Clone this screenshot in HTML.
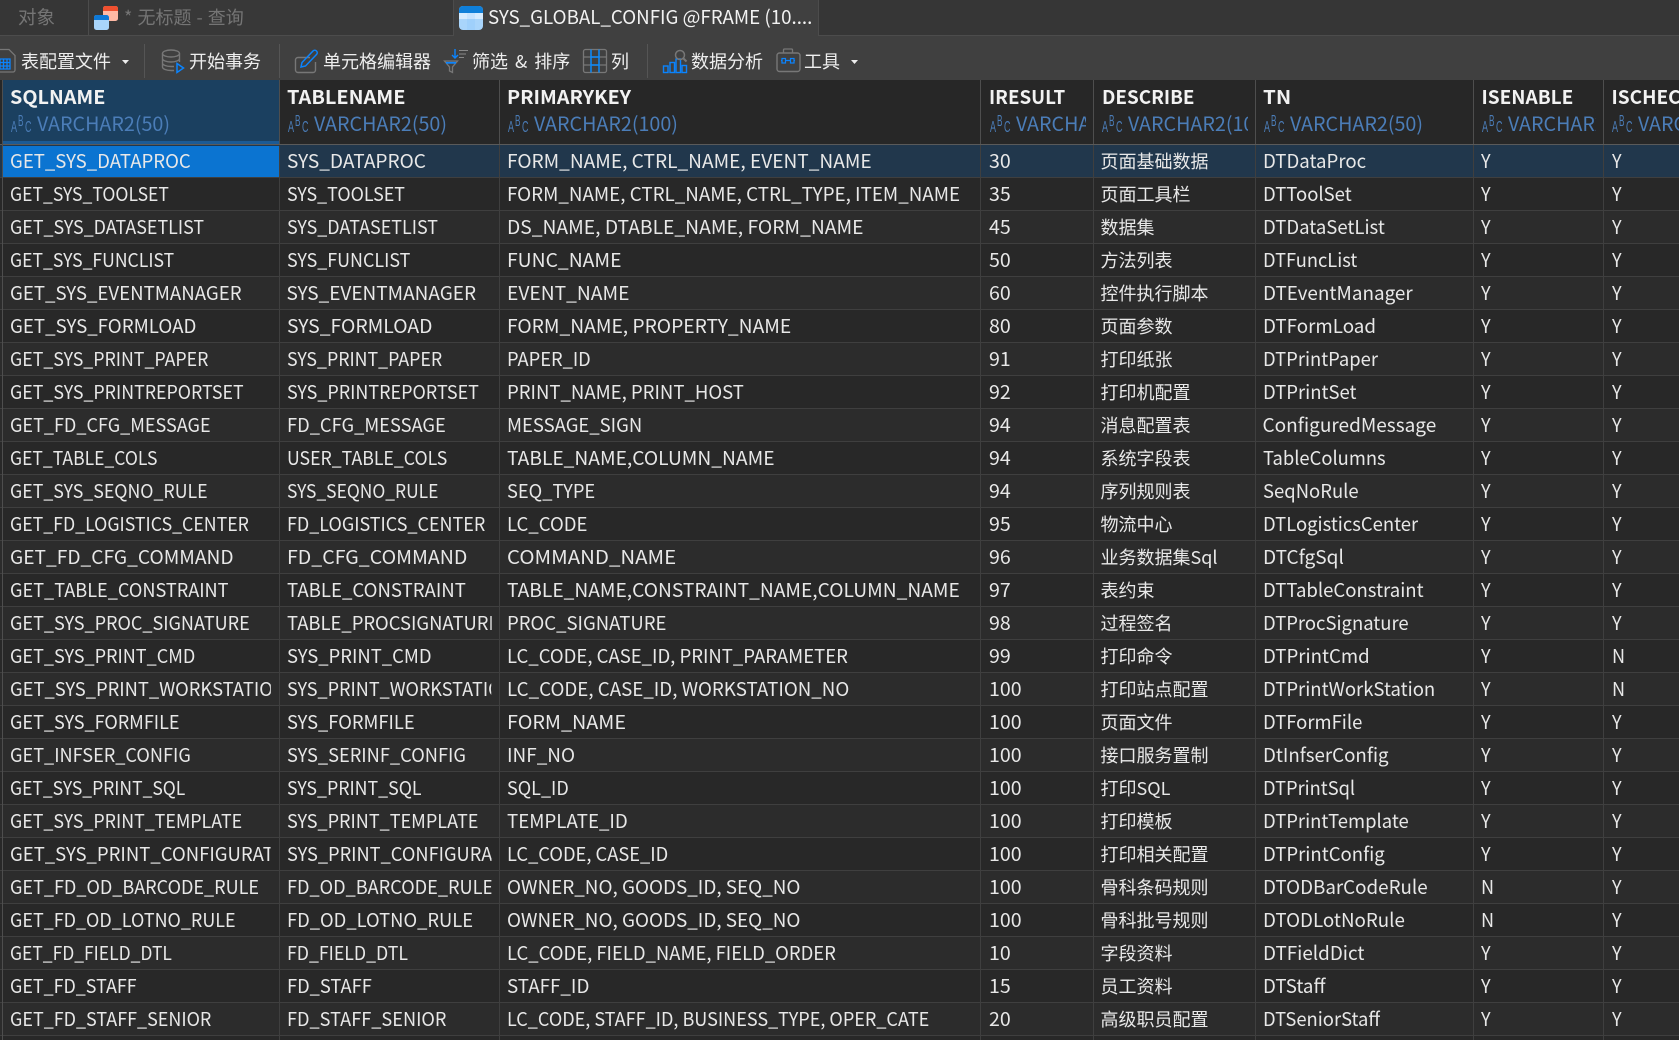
<!DOCTYPE html>
<html lang="zh"><head><meta charset="utf-8"><title>SYS_GLOBAL_CONFIG</title>
<style>
html,body{margin:0;padding:0;background:#2a2a2a;width:1679px;height:1040px;overflow:hidden}
#p{position:relative;width:1679px;height:1040px;overflow:hidden;font-family:"Noto Sans CJK SC","Liberation Sans",sans-serif;color:#e8e8e8}
.abs,.tab,.tt,.sep,.ti{position:absolute}
#tabs{position:absolute;left:0;top:0;width:1679px;height:35px;background:#363636;border-bottom:1px solid #4c4c4c}
.tab{top:0;height:35px}
.tt{white-space:nowrap;line-height:34px;top:0}
#bar{position:absolute;left:0;top:36px;width:1679px;height:44px;background:#404040}
.sep{top:8px;width:1px;height:34px;background:#555}
.ti{top:0;line-height:50px;font-size:18px;color:#eee;white-space:nowrap}
#head{position:absolute;left:0;top:80px;width:1679px;height:64px;background:#272727}
.h{position:absolute;top:0;height:64px;border-right:1px solid #4e4e4e}
.h .n{position:absolute;top:-3px;left:6.5px;line-height:40px;font-size:19px;font-weight:700;color:#f2f2f2;white-space:nowrap;transform-origin:0 50%;transform:scaleX(var(--s,1))}
.h .y{position:absolute;top:30px;height:28px;left:34px;right:7px;overflow:hidden}
.h .y span{display:block;line-height:26px;font-size:19.500px;color:#4b7db8;white-space:nowrap;transform-origin:0 50%;transform:scaleX(1.01)}
.h svg{position:absolute;left:7px;top:34px}
.h svg text{font:16px "Liberation Sans",sans-serif;fill:#4b7db8}
#rows{position:absolute;left:0;top:145px;width:1679px}
.r{position:relative;height:32px;border-bottom:1px solid #3f3f3f;background:#2c2c2c}
.r:nth-child(even){background:#282828}
.c{position:absolute;top:0;height:32px;box-sizing:border-box;border-right:1px solid #3f3f3f;overflow:hidden;line-height:31px;font-size:19px;white-space:nowrap;padding-left:6.500px}
.c span{display:inline-block;vertical-align:top;overflow:hidden;transform-origin:0 50%;transform:scaleX(var(--s,.95))}
.c:nth-child(1){left:3px;width:277px}
.c:nth-child(1) span{max-width:calc(261px / var(--s,.95))}
.c:nth-child(2){left:280px;width:220px}
.c:nth-child(2) span{max-width:calc(204.500px / var(--s,.95))}
.c:nth-child(3){left:500px;width:481px}
.c:nth-child(4){left:981px;width:113px;padding-left:7.500px}
.c:nth-child(4) span{--s:1.03}
.c:nth-child(5){left:1094px;width:162px;font-size:18px;line-height:33px}
.c:nth-child(5) span{transform:none}
.c:nth-child(6){left:1256px;width:218px}
.c:nth-child(7){left:1474px;width:130px}
.c:nth-child(8){left:1604px;width:75px;padding-left:7.500px;border:none}
#l0{position:absolute;left:2px;top:80px;width:1px;height:960px;background:#4e4e4e}
</style></head><body><div id="p">
<div id="tabs">
<div class="tab" style="left:0;width:88px;background:#363636;border-right:1px solid #4c4c4c"><div class="tt" style="left:18px;font-size:18.500px;color:#757575">对象</div></div>
<div class="tab" style="left:89px;width:364px;background:#383838;border-right:1px solid #4c4c4c">
<svg class="abs" style="left:5px;top:6px" width="26" height="26" viewBox="0 0 26 26"><rect x="9" y="0" width="15" height="15" rx="2.5" fill="#ffb9a4"/><path d="M9 5V2.5A2.5 2.5 0 0 1 11.500 0h10A2.500 2.500 0 0 1 24 2.500V5z" fill="#f0502f"/><rect x="0" y="9" width="15" height="15" rx="2.500" fill="#a9d5fb"/><path d="M0 14v-2.500A2.500 2.500 0 0 1 2.500 9h10a2.500 2.500 0 0 1 2.500 2.500V14z" fill="#0d78d6"/></svg>
<div class="tt" style="left:35px;font-size:18px;word-spacing:1px;color:#757575">* 无标题 - 查询</div></div>
<div class="tab" style="left:454px;width:364px;height:36px;background:#404040;border-right:1px solid #4c4c4c">
<svg class="abs" style="left:5px;top:6px" width="24" height="24" viewBox="0 0 24 24"><rect width="24" height="24" rx="4" fill="#a9d5fb"/><path d="M0 7V4a4 4 0 0 1 4-4h16a4 4 0 0 1 4 4v3z" fill="#0f7fd9"/><rect x="0" y="7" width="24" height="6" fill="#d5ebff"/><path d="M8 7h8v6H8z" fill="#c6e3ff"/><path d="M8 13h8v11H8z" fill="#9fd0fb"/></svg>
<div class="tt" style="left:34px;font-size:19px;color:#f2f2f2;transform-origin:0 50%;transform:scaleX(.986)">SYS_GLOBAL_CONFIG @FRAME (10....</div></div>
</div>
<div id="bar">
<svg class="abs" style="left:0;top:0" width="862" height="44" viewBox="0 36 862 44" fill="none">
<path d="M-2 49.500H9l6 6V70a2 2 0 0 1-2 2H-2" stroke="#777" stroke-width="1.300"/><path d="M0 59h10v10H0zM0 62.500h10M0 66h10M3.500 59v10M7 59v10" stroke="#0a84ff" stroke-width="1.300"/>
<path d="M122 60h7l-3.500 4z" fill="#eee"/>
<g stroke="#777" stroke-width="1.400"><ellipse cx="171" cy="53.500" rx="8.500" ry="3.500"/><path d="M162.500 53.500V67c0 2 4 3.500 8.500 3.500h3M179.500 53.500V62M162.500 58.500c0 2 4 3.500 8.500 3.500s8.500-1.500 8.500-3.500M162.500 63c0 2 4 3.500 8.500 3.500h3"/></g><path d="M177 63.500l6.500 4.500-6.500 4.500z" stroke="#0a84ff" stroke-width="1.500"/>
<path d="M310 57.500h-12a2.500 2.500 0 0 0-2.500 2.500v10a2.500 2.500 0 0 0 2.500 2.500h15a2.500 2.500 0 0 0 2.500-2.500v-8" stroke="#777" stroke-width="1.400"/><path d="M301 67l1-4.500 11-11.500c1-1 2.500-1 3.500 0s1 2.500 0 3.500L305.500 66z" stroke="#0a84ff" stroke-width="1.500"/>
<path d="M444.500 61h13l-5 6v5.500l-3-1.500v-4z" stroke="#777" stroke-width="1.300"/><path d="M446 62.800h10" stroke="#0a84ff" stroke-width="1.800"/><path d="M455 49v9M452 55l3 3 3-3" stroke="#0a84ff" stroke-width="1.400"/><path d="M459 50.500h9M459 54h7M459 57.500h5" stroke="#888" stroke-width="1"/>
<rect x="583.500" y="49.500" width="23" height="23" rx="2" stroke="#777" stroke-width="1.300"/><path d="M583.500 57h23M583.500 65h23" stroke="#777" stroke-width="1.300"/><path d="M591 49.500V72.500M599 49.500V72.500M591 57h8M591 65h8" stroke="#0a8cff" stroke-width="1.500"/>
<g stroke="#0a84ff" stroke-width="1.400"><rect x="663.500" y="66" width="4.500" height="6.500"/><rect x="670" y="62.500" width="4.500" height="10"/><rect x="676" y="59" width="4.500" height="13.500"/><rect x="682" y="65.500" width="4.500" height="7"/></g><circle cx="680" cy="55" r="4.500" stroke="#777" stroke-width="1.500"/><path d="M683.500 58.500l3 3" stroke="#777" stroke-width="2"/>
<path d="M783.500 53v-3a1 1 0 0 1 1-1h7a1 1 0 0 1 1 1v3" stroke="#777" stroke-width="1.300"/><rect x="777" y="53" width="23" height="18.500" rx="2.500" stroke="#777" stroke-width="1.400"/><path d="M781 60.500h1M794 60.500h1M785.500 60.500h5" stroke="#0a84ff" stroke-width="1.300"/><rect x="782" y="58.500" width="3.500" height="4.500" stroke="#0a84ff" stroke-width="1.200"/><rect x="790.500" y="58.500" width="3.500" height="4.500" stroke="#0a84ff" stroke-width="1.200"/>
<path d="M851 60h7l-3.500 4z" fill="#eee"/>
</svg>
<div class="sep" style="left:144px"></div><div class="sep" style="left:279px"></div><div class="sep" style="left:647px"></div>
<div class="ti" style="left:21px">表配置文件</div>
<div class="ti" style="left:189px">开始事务</div>
<div class="ti" style="left:323px">单元格编辑器</div>
<div class="ti" style="left:472px;word-spacing:3px">筛选 &amp; 排序</div>
<div class="ti" style="left:611px">列</div>
<div class="ti" style="left:691px">数据分析</div>
<div class="ti" style="left:804px">工具</div>
</div>
<div id="head">
<div class="h" style="left:3px;width:276px;background:#1b4060;box-shadow:inset 0 -3px 0 #1c5a94"><div class="n" style="--s:1.04">SQLNAME</div><svg width="30" height="26"><text x="1" y="18" textLength="6" lengthAdjust="spacingAndGlyphs">A</text><text x="8" y="12" textLength="5.500" lengthAdjust="spacingAndGlyphs">B</text><text x="15" y="18" textLength="6.500" lengthAdjust="spacingAndGlyphs">C</text></svg><div class="y"><span>VARCHAR2(50)</span></div></div>
<div class="h" style="left:280px;width:219px"><div class="n" style="--s:1.048">TABLENAME</div><svg width="30" height="26"><text x="1" y="18" textLength="6" lengthAdjust="spacingAndGlyphs">A</text><text x="8" y="12" textLength="5.500" lengthAdjust="spacingAndGlyphs">B</text><text x="15" y="18" textLength="6.500" lengthAdjust="spacingAndGlyphs">C</text></svg><div class="y"><span>VARCHAR2(50)</span></div></div>
<div class="h" style="left:500px;width:480px"><div class="n" style="--s:1.036">PRIMARYKEY</div><svg width="30" height="26"><text x="1" y="18" textLength="6" lengthAdjust="spacingAndGlyphs">A</text><text x="8" y="12" textLength="5.500" lengthAdjust="spacingAndGlyphs">B</text><text x="15" y="18" textLength="6.500" lengthAdjust="spacingAndGlyphs">C</text></svg><div class="y"><span>VARCHAR2(100)</span></div></div>
<div class="h" style="left:981px;width:112px"><div class="n" style="--s:.986;left:7.500px">IRESULT</div><svg width="30" height="26" style="left:8px"><text x="1" y="18" textLength="6" lengthAdjust="spacingAndGlyphs">A</text><text x="8" y="12" textLength="5.500" lengthAdjust="spacingAndGlyphs">B</text><text x="15" y="18" textLength="6.500" lengthAdjust="spacingAndGlyphs">C</text></svg><div class="y" style="left:35px"><span>VARCHAR2(50)</span></div></div>
<div class="h" style="left:1094px;width:161px"><div class="n" style="--s:.99;left:7.500px">DESCRIBE</div><svg width="30" height="26"><text x="1" y="18" textLength="6" lengthAdjust="spacingAndGlyphs">A</text><text x="8" y="12" textLength="5.500" lengthAdjust="spacingAndGlyphs">B</text><text x="15" y="18" textLength="6.500" lengthAdjust="spacingAndGlyphs">C</text></svg><div class="y"><span>VARCHAR2(100)</span></div></div>
<div class="h" style="left:1256px;width:217px"><div class="n" style="--s:1.08">TN</div><svg width="30" height="26"><text x="1" y="18" textLength="6" lengthAdjust="spacingAndGlyphs">A</text><text x="8" y="12" textLength="5.500" lengthAdjust="spacingAndGlyphs">B</text><text x="15" y="18" textLength="6.500" lengthAdjust="spacingAndGlyphs">C</text></svg><div class="y"><span>VARCHAR2(50)</span></div></div>
<div class="h" style="left:1474px;width:129px"><div class="n" style="left:7.500px">ISENABLE</div><svg width="30" height="26"><text x="1" y="18" textLength="6" lengthAdjust="spacingAndGlyphs">A</text><text x="8" y="12" textLength="5.500" lengthAdjust="spacingAndGlyphs">B</text><text x="15" y="18" textLength="6.500" lengthAdjust="spacingAndGlyphs">C</text></svg><div class="y"><span>VARCHAR2(1)</span></div></div>
<div class="h" style="left:1604px;width:80px;border:none"><div class="n" style="left:7.500px">ISCHECK</div><svg width="30" height="26"><text x="1" y="18" textLength="6" lengthAdjust="spacingAndGlyphs">A</text><text x="8" y="12" textLength="5.500" lengthAdjust="spacingAndGlyphs">B</text><text x="15" y="18" textLength="6.500" lengthAdjust="spacingAndGlyphs">C</text></svg><div class="y" style="right:0"><span>VARCHAR2(1)</span></div></div>
</div>
<div class="abs" style="left:0;top:144px;width:1679px;height:1px;background:#5a5a5a"></div>
<div id="rows">
<div class="r" style="background:#21374c"><div class="c" style="background:#0b74d1;top:1px;height:31px;line-height:29px"><span style="--s:.979">GET_SYS_DATAPROC</span></div><div class="c"><span style="--s:1.004">SYS_DATAPROC</span></div><div class="c"><span style="--s:1.006">FORM_NAME, CTRL_NAME, EVENT_NAME</span></div><div class="c"><span>30</span></div><div class="c"><span>页面基础数据</span></div><div class="c"><span style="--s:.98">DTDataProc</span></div><div class="c"><span>Y</span></div><div class="c"><span>Y</span></div></div>
<div class="r"><div class="c"><span style="--s:.925">GET_SYS_TOOLSET</span></div><div class="c"><span style="--s:.94">SYS_TOOLSET</span></div><div class="c"><span style="--s:.99">FORM_NAME, CTRL_NAME, CTRL_TYPE, ITEM_NAME</span></div><div class="c"><span>35</span></div><div class="c"><span>页面工具栏</span></div><div class="c"><span style="--s:.973">DTToolSet</span></div><div class="c"><span>Y</span></div><div class="c"><span>Y</span></div></div>
<div class="r"><div class="c"><span style="--s:.94">GET_SYS_DATASETLIST</span></div><div class="c"><span style="--s:.943">SYS_DATASETLIST</span></div><div class="c"><span style="--s:1.014">DS_NAME, DTABLE_NAME, FORM_NAME</span></div><div class="c"><span>45</span></div><div class="c"><span>数据集</span></div><div class="c"><span style="--s:.976">DTDataSetList</span></div><div class="c"><span>Y</span></div><div class="c"><span>Y</span></div></div>
<div class="r"><div class="c"><span style="--s:.926">GET_SYS_FUNCLIST</span></div><div class="c"><span style="--s:.942">SYS_FUNCLIST</span></div><div class="c"><span style="--s:1.017">FUNC_NAME</span></div><div class="c"><span>50</span></div><div class="c"><span>方法列表</span></div><div class="c"><span style="--s:.961">DTFuncList</span></div><div class="c"><span>Y</span></div><div class="c"><span>Y</span></div></div>
<div class="r"><div class="c"><span style="--s:.982">GET_SYS_EVENTMANAGER</span></div><div class="c"><span style="--s:1">SYS_EVENTMANAGER</span></div><div class="c"><span style="--s:1.012">EVENT_NAME</span></div><div class="c"><span>60</span></div><div class="c"><span>控件执行脚本</span></div><div class="c"><span style="--s:.993">DTEventManager</span></div><div class="c"><span>Y</span></div><div class="c"><span>Y</span></div></div>
<div class="r"><div class="c"><span style="--s:.985">GET_SYS_FORMLOAD</span></div><div class="c"><span style="--s:1.018">SYS_FORMLOAD</span></div><div class="c"><span style="--s:1.012">FORM_NAME, PROPERTY_NAME</span></div><div class="c"><span>80</span></div><div class="c"><span>页面参数</span></div><div class="c"><span style="--s:.988">DTFormLoad</span></div><div class="c"><span>Y</span></div><div class="c"><span>Y</span></div></div>
<div class="r"><div class="c"><span style="--s:.935">GET_SYS_PRINT_PAPER</span></div><div class="c"><span style="--s:.935">SYS_PRINT_PAPER</span></div><div class="c"><span style="--s:.962">PAPER_ID</span></div><div class="c"><span>91</span></div><div class="c"><span>打印纸张</span></div><div class="c"><span style="--s:.968">DTPrintPaper</span></div><div class="c"><span>Y</span></div><div class="c"><span>Y</span></div></div>
<div class="r"><div class="c"><span style="--s:.937">GET_SYS_PRINTREPORTSET</span></div><div class="c"><span style="--s:.945">SYS_PRINTREPORTSET</span></div><div class="c"><span style="--s:.977">PRINT_NAME, PRINT_HOST</span></div><div class="c"><span>92</span></div><div class="c"><span>打印机配置</span></div><div class="c"><span style="--s:.973">DTPrintSet</span></div><div class="c"><span>Y</span></div><div class="c"><span>Y</span></div></div>
<div class="r"><div class="c"><span style="--s:.95">GET_FD_CFG_MESSAGE</span></div><div class="c"><span style="--s:.963">FD_CFG_MESSAGE</span></div><div class="c"><span style="--s:.973">MESSAGE_SIGN</span></div><div class="c"><span>94</span></div><div class="c"><span>消息配置表</span></div><div class="c"><span style="--s:1">ConfiguredMessage</span></div><div class="c"><span>Y</span></div><div class="c"><span>Y</span></div></div>
<div class="r"><div class="c"><span style="--s:.923">GET_TABLE_COLS</span></div><div class="c"><span style="--s:.931">USER_TABLE_COLS</span></div><div class="c"><span style="--s:1.011">TABLE_NAME,COLUMN_NAME</span></div><div class="c"><span>94</span></div><div class="c"><span>系统字段表</span></div><div class="c"><span style="--s:.967">TableColumns</span></div><div class="c"><span>Y</span></div><div class="c"><span>Y</span></div></div>
<div class="r"><div class="c"><span style="--s:.935">GET_SYS_SEQNO_RULE</span></div><div class="c"><span style="--s:.917">SYS_SEQNO_RULE</span></div><div class="c"><span style="--s:.962">SEQ_TYPE</span></div><div class="c"><span>94</span></div><div class="c"><span>序列规则表</span></div><div class="c"><span style="--s:.972">SeqNoRule</span></div><div class="c"><span>Y</span></div><div class="c"><span>Y</span></div></div>
<div class="r"><div class="c"><span style="--s:.933">GET_FD_LOGISTICS_CENTER</span></div><div class="c"><span style="--s:.945">FD_LOGISTICS_CENTER</span></div><div class="c"><span style="--s:.976">LC_CODE</span></div><div class="c"><span>95</span></div><div class="c"><span>物流中心</span></div><div class="c"><span style="--s:.97">DTLogisticsCenter</span></div><div class="c"><span>Y</span></div><div class="c"><span>Y</span></div></div>
<div class="r"><div class="c"><span style="--s:1.01">GET_FD_CFG_COMMAND</span></div><div class="c"><span style="--s:1.03">FD_CFG_COMMAND</span></div><div class="c"><span style="--s:1.075">COMMAND_NAME</span></div><div class="c"><span>96</span></div><div class="c"><span>业务数据集Sql</span></div><div class="c"><span style="--s:1.003">DTCfgSql</span></div><div class="c"><span>Y</span></div><div class="c"><span>Y</span></div></div>
<div class="r"><div class="c"><span style="--s:.955">GET_TABLE_CONSTRAINT</span></div><div class="c"><span style="--s:.98">TABLE_CONSTRAINT</span></div><div class="c"><span style="--s:1.01">TABLE_NAME,CONSTRAINT_NAME,COLUMN_NAME</span></div><div class="c"><span>97</span></div><div class="c"><span>表约束</span></div><div class="c"><span style="--s:.976">DTTableConstraint</span></div><div class="c"><span>Y</span></div><div class="c"><span>Y</span></div></div>
<div class="r"><div class="c"><span style="--s:.95">GET_SYS_PROC_SIGNATURE</span></div><div class="c"><span style="--s:.97">TABLE_PROCSIGNATURE</span></div><div class="c"><span style="--s:.976">PROC_SIGNATURE</span></div><div class="c"><span>98</span></div><div class="c"><span>过程签名</span></div><div class="c"><span style="--s:.971">DTProcSignature</span></div><div class="c"><span>Y</span></div><div class="c"><span>Y</span></div></div>
<div class="r"><div class="c"><span style="--s:.95">GET_SYS_PRINT_CMD</span></div><div class="c"><span style="--s:.972">SYS_PRINT_CMD</span></div><div class="c"><span style="--s:.975">LC_CODE, CASE_ID, PRINT_PARAMETER</span></div><div class="c"><span>99</span></div><div class="c"><span>打印命令</span></div><div class="c"><span style="--s:.98">DTPrintCmd</span></div><div class="c"><span>Y</span></div><div class="c"><span>N</span></div></div>
<div class="r"><div class="c"><span style="--s:.966">GET_SYS_PRINT_WORKSTATION</span></div><div class="c"><span style="--s:.95">SYS_PRINT_WORKSTATION</span></div><div class="c"><span style="--s:.987">LC_CODE, CASE_ID, WORKSTATION_NO</span></div><div class="c"><span>100</span></div><div class="c"><span>打印站点配置</span></div><div class="c"><span style="--s:.974">DTPrintWorkStation</span></div><div class="c"><span>Y</span></div><div class="c"><span>N</span></div></div>
<div class="r"><div class="c"><span style="--s:.95">GET_SYS_FORMFILE</span></div><div class="c"><span style="--s:.966">SYS_FORMFILE</span></div><div class="c"><span style="--s:1.04">FORM_NAME</span></div><div class="c"><span>100</span></div><div class="c"><span>页面文件</span></div><div class="c"><span style="--s:.971">DTFormFile</span></div><div class="c"><span>Y</span></div><div class="c"><span>Y</span></div></div>
<div class="r"><div class="c"><span style="--s:.955">GET_INFSER_CONFIG</span></div><div class="c"><span style="--s:.961">SYS_SERINF_CONFIG</span></div><div class="c"><span style="--s:.997">INF_NO</span></div><div class="c"><span>100</span></div><div class="c"><span>接口服务置制</span></div><div class="c"><span style="--s:.984">DtInfserConfig</span></div><div class="c"><span>Y</span></div><div class="c"><span>Y</span></div></div>
<div class="r"><div class="c"><span style="--s:.922">GET_SYS_PRINT_SQL</span></div><div class="c"><span style="--s:.935">SYS_PRINT_SQL</span></div><div class="c"><span style="--s:.95">SQL_ID</span></div><div class="c"><span>100</span></div><div class="c"><span>打印SQL</span></div><div class="c"><span style="--s:.961">DTPrintSql</span></div><div class="c"><span>Y</span></div><div class="c"><span>Y</span></div></div>
<div class="r"><div class="c"><span style="--s:.937">GET_SYS_PRINT_TEMPLATE</span></div><div class="c"><span style="--s:.95">SYS_PRINT_TEMPLATE</span></div><div class="c"><span style="--s:.985">TEMPLATE_ID</span></div><div class="c"><span>100</span></div><div class="c"><span>打印模板</span></div><div class="c"><span style="--s:.971">DTPrintTemplate</span></div><div class="c"><span>Y</span></div><div class="c"><span>Y</span></div></div>
<div class="r"><div class="c"><span style="--s:.976">GET_SYS_PRINT_CONFIGURATION</span></div><div class="c"><span style="--s:.96">SYS_PRINT_CONFIGURATION</span></div><div class="c"><span style="--s:.963">LC_CODE, CASE_ID</span></div><div class="c"><span>100</span></div><div class="c"><span>打印相关配置</span></div><div class="c"><span style="--s:.976">DTPrintConfig</span></div><div class="c"><span>Y</span></div><div class="c"><span>Y</span></div></div>
<div class="r"><div class="c"><span style="--s:.95">GET_FD_OD_BARCODE_RULE</span></div><div class="c"><span style="--s:.955">FD_OD_BARCODE_RULE</span></div><div class="c"><span style="--s:.994">OWNER_NO, GOODS_ID, SEQ_NO</span></div><div class="c"><span>100</span></div><div class="c"><span>骨科条码规则</span></div><div class="c"><span style="--s:.988">DTODBarCodeRule</span></div><div class="c"><span>N</span></div><div class="c"><span>Y</span></div></div>
<div class="r"><div class="c"><span style="--s:.945">GET_FD_OD_LOTNO_RULE</span></div><div class="c"><span style="--s:.967">FD_OD_LOTNO_RULE</span></div><div class="c"><span style="--s:.994">OWNER_NO, GOODS_ID, SEQ_NO</span></div><div class="c"><span>100</span></div><div class="c"><span>骨科批号规则</span></div><div class="c"><span style="--s:.987">DTODLotNoRule</span></div><div class="c"><span>N</span></div><div class="c"><span>Y</span></div></div>
<div class="r"><div class="c"><span style="--s:.92">GET_FD_FIELD_DTL</span></div><div class="c"><span style="--s:.933">FD_FIELD_DTL</span></div><div class="c"><span style="--s:.972">LC_CODE, FIELD_NAME, FIELD_ORDER</span></div><div class="c"><span>10</span></div><div class="c"><span>字段资料</span></div><div class="c"><span style="--s:.992">DTFieldDict</span></div><div class="c"><span>Y</span></div><div class="c"><span>Y</span></div></div>
<div class="r"><div class="c"><span style="--s:.942">GET_FD_STAFF</span></div><div class="c"><span style="--s:.962">FD_STAFF</span></div><div class="c"><span style="--s:.99">STAFF_ID</span></div><div class="c"><span>15</span></div><div class="c"><span>员工资料</span></div><div class="c"><span style="--s:.983">DTStaff</span></div><div class="c"><span>Y</span></div><div class="c"><span>Y</span></div></div>
<div class="r"><div class="c"><span style="--s:.945">GET_FD_STAFF_SENIOR</span></div><div class="c"><span style="--s:.956">FD_STAFF_SENIOR</span></div><div class="c"><span style="--s:.95">LC_CODE, STAFF_ID, BUSINESS_TYPE, OPER_CATE</span></div><div class="c"><span>20</span></div><div class="c"><span>高级职员配置</span></div><div class="c"><span style="--s:.968">DTSeniorStaff</span></div><div class="c"><span>Y</span></div><div class="c"><span>Y</span></div></div>
<div class="r"><div class="c"></div><div class="c"></div><div class="c"></div><div class="c"></div><div class="c"></div><div class="c"></div><div class="c"></div><div class="c"></div></div>
</div>
<div id="l0"></div>
</div></body></html>
